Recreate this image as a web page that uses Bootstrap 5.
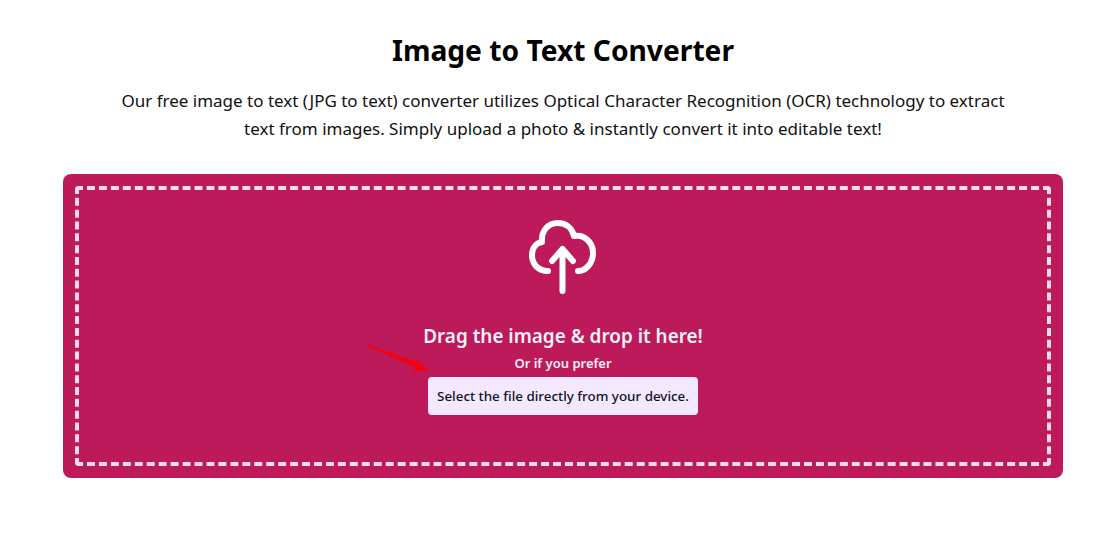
<!DOCTYPE html>
<html lang="en">
<head>
<meta charset="utf-8">
<title>Image to Text Converter</title>
<link href="https://cdn.jsdelivr.net/npm/bootstrap@5.3.0/dist/css/bootstrap.min.css" rel="stylesheet">
<style>
body{font-family:"Noto Sans","Open Sans",sans-serif;background:#fff;color:#000;height:546px;overflow:hidden}
.page-wrap{width:1000px;margin-left:63px}
.page-title{font-size:28.2px;font-weight:700;line-height:36px;margin:32px 0 0;color:#000}
.page-intro{width:900px;margin:19px auto 0;font-size:17px;line-height:28px;color:#111}
.drop-panel{height:304px;margin-top:31px;padding:12px;background:#bc1a5b;border-radius:8px}
.drop-zone{height:280px;border:4px dashed #f0dde8;border-radius:4px;color:#f8f0f8}
.cloud-icon{width:74px;height:80px;margin-top:26px}
.drop-head{font-size:18.9px;font-weight:600;line-height:26px;margin:27px 0 0}
.drop-sub{font-size:13px;font-weight:600;line-height:18px;margin:5px 0 5px}
.pick-btn{background:#f3e8fd;color:#12122a;font-size:13.4px;font-weight:500;line-height:18px;padding:10px 9px;border:0;border-radius:4px;white-space:nowrap}
.pick-btn:hover{background:#f3e8fd;color:#12122a}
.arrow-mark{position:absolute;left:289px;top:154px;width:64px;height:40px}
</style>
</head>
<body>
<main class="page-wrap text-center">
  <h1 class="page-title">Image to Text Converter</h1>
  <p class="page-intro">Our free image to text (JPG to text) converter utilizes Optical Character Recognition (OCR) technology to extract text from images. Simply upload a photo &amp; instantly convert it into editable text!</p>
  <section class="drop-panel">
    <div class="drop-zone position-relative d-flex flex-column align-items-center">
      <svg class="cloud-icon" viewBox="0 0 74 80" fill="none" stroke="#fff" stroke-width="6" stroke-linecap="round" stroke-linejoin="round">
        <path d="M22 55C12 55 6 48 6 39 6 32 10 27 16 26 15 15 22 7 32 7 40 7 46 12 48 20 59 18 67 27 67 37 67 47 60 55 52 55"/>
        <path d="M36.500 75V33M26 45l10.500-12L47 45"/>
      </svg>
      <h2 class="drop-head">Drag the image &amp; drop it here!</h2>
      <p class="drop-sub">Or if you prefer</p>
      <button type="button" class="btn pick-btn">Select the file directly from your device.</button>
      <svg class="arrow-mark" viewBox="0 0 64 40">
        <path d="M0 .5 48 17.500 46 14 61 26 43 28 48.500 24 0 2.500Z" fill="#f00414"/>
      </svg>
    </div>
  </section>
</main>
<script src="https://cdn.jsdelivr.net/npm/bootstrap@5.3.0/dist/js/bootstrap.bundle.min.js"></script>
</body>
</html>
